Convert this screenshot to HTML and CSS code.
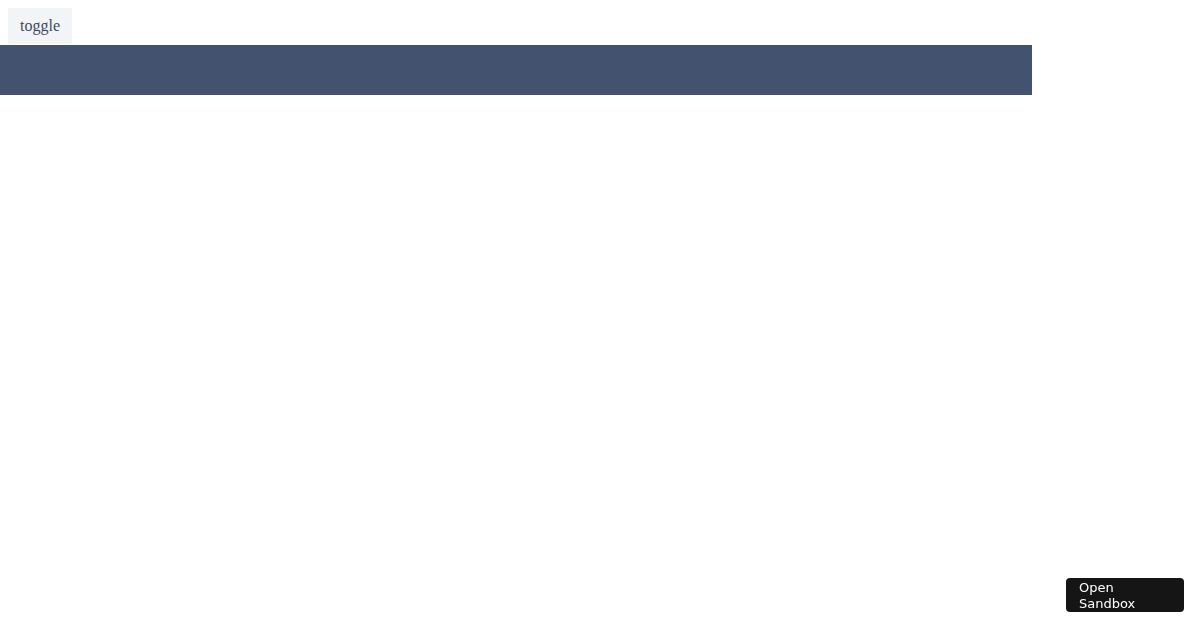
FILE: index.html
```html
<!DOCTYPE html>
<html>
<head>
<meta charset="utf-8">
<link rel="stylesheet" href="styles.css">
</head>
<body>
<div class="top">
  <button class="toggle">toggle</button>
</div>
<div class="bar"></div>
<a class="sandbox">Open Sandbox</a>
</body>
</html>
```
FILE: styles.css
```css
html, body { margin: 0; padding: 0; background: #fff; }
.top { padding: 8px 8px 1px; }
.toggle {
  display: block;
  margin: 0;
  border: none;
  border-radius: 2px;
  background: #f3f4f6;
  color: #3b4a63;
  font-family: "Liberation Serif", serif;
  font-size: 16px;
  line-height: 20px;
  height: 36px;
  padding: 8px 12px;
}
.bar { width: 86%; height: 50px; background: #43536f; }
.sandbox {
  position: fixed;
  right: 16px;
  bottom: 18px;
  width: 118px;
  height: 34px;
  box-sizing: border-box;
  padding: 2px 13px 0;
  background: #151515;
  border-radius: 4px;
  color: #fff;
  font-family: "DejaVu Sans", sans-serif;
  font-size: 13px;
  line-height: 16px;
}
```
